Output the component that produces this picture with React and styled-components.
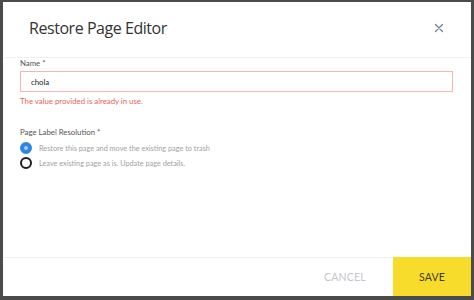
import styled, { createGlobalStyle } from 'styled-components';

const GlobalStyle = createGlobalStyle`
  html, body {
    margin: 0;
    padding: 0;
    background: #4b4b4b;
    font-family: 'Lato', 'Open Sans', sans-serif;
  }
  #root {
    width: 474px;
    height: 300px;
    display: flex;
  }
`;

const Modal = styled.div`
  margin: 2px 3px 4px 3px;
  flex: 1;
  background: #fff;
  display: flex;
  flex-direction: column;
`;

const Header = styled.div`
  height: 56px;
  box-sizing: border-box;
  display: flex;
  align-items: center;
  justify-content: space-between;
  padding: 0 27px 4px 26px;
  border-bottom: 1px solid #f2f2f2;
`;

const Title = styled.h1`
  margin: 0;
  font-family: 'Open Sans', sans-serif;
  font-weight: 400;
  font-size: 16px;
  color: #333;
  letter-spacing: -0.45px;
`;

const CloseButton = styled.button`
  border: none;
  background: none;
  padding: 0;
  width: 10px;
  height: 10px;
  display: flex;
  cursor: pointer;
`;

const Body = styled.div`
  flex: 1;
  padding: 0 18px 0 17px;
  display: flex;
  flex-direction: column;
`;

const Label = styled.label`
  font-size: 7.8px;
  color: #555;
  line-height: 10px;
  margin-top: ${p => p.$gap || 0}px;
`;

const Input = styled.input`
  margin-top: 3px;
  height: 21px;
  box-sizing: border-box;
  border: 1px solid #f4b5b5;
  padding: 0 10px;
  font-family: 'Lato', sans-serif;
  font-size: 7.8px;
  color: #222;
  outline: none;
`;

const ErrorText = styled.div`
  margin-top: 3.5px;
  font-size: 7.8px;
  line-height: 10px;
  color: #e8625c;
`;

const RadioRow = styled.label`
  display: flex;
  align-items: center;
  gap: 7px;
  height: 15px;
  font-size: 7.3px;
  color: #a2a2a2;
  margin-top: ${p => p.$gap || 0}px;
`;

const RadioDot = styled.span`
  width: 12px;
  height: 12px;
  box-sizing: border-box;
  border-radius: 50%;
  display: flex;
  align-items: center;
  justify-content: center;
  border: ${p => (p.$checked ? '2px solid #2f86dc' : '2px solid #1d1d1d')};
  background: ${p => (p.$checked ? '#2f86dc' : '#fff')};

  &::after {
    content: '';
    width: 4px;
    height: 4px;
    border-radius: 50%;
    background: #9fcbf3;
    display: ${p => (p.$checked ? 'block' : 'none')};
  }
`;

const Footer = styled.div`
  height: 38px;
  display: flex;
  justify-content: flex-end;
  border-top: 1px solid #f0f0f0;
`;

const FooterButton = styled.button`
  border: none;
  width: ${p => p.$w}px;
  background: ${p => (p.$primary ? '#f8dc2c' : '#fff')};
  color: ${p => (p.$primary ? '#3a3a2a' : '#c3c6ca')};
  font-family: 'Lato', sans-serif;
  font-size: 10.5px;
  letter-spacing: 0.2px;
  cursor: pointer;
  padding: 0;
  margin-top: ${p => (p.$primary ? '-1px' : '0')};
`;

export default function App() {
  return (
    <>
      <GlobalStyle />
      <Modal>
        <Header>
          <Title>Restore Page Editor</Title>
          <CloseButton aria-label="close">
            <svg width="10" height="10" viewBox="0 0 10 10">
              <path d="M1.5 1.5 L8.5 8.5 M8.5 1.5 L1.5 8.5" stroke="#6e8296" strokeWidth="1.3" strokeLinecap="round" />
            </svg>
          </CloseButton>
        </Header>
        <Body>
          <Label>Name *</Label>
          <Input defaultValue="chola" />
          <ErrorText>The value provided is already in use.</ErrorText>
          <Label $gap={21}>Page Label Resolution *</Label>
          <RadioRow $gap={4}>
            <RadioDot $checked />
            Restore this page and move the existing page to trash
          </RadioRow>
          <RadioRow>
            <RadioDot />
            Leave existing page as is. Update page details.
          </RadioRow>
        </Body>
        <Footer>
          <FooterButton $w={96}>CANCEL</FooterButton>
          <FooterButton $w={78} $primary>SAVE</FooterButton>
        </Footer>
      </Modal>
    </>
  );
}
